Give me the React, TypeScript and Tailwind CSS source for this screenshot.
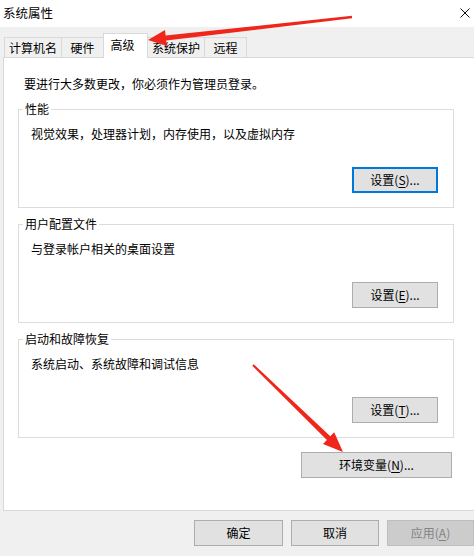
import React from "react";

const font = { fontFamily: '"Noto Sans CJK SC", "Noto Sans", sans-serif' };

function U({ c }: { c: string }) {
  return <span className="underline underline-offset-2">{c}</span>;
}

function Btn({
  children,
  w,
  focused,
  disabled,
}: {
  children: React.ReactNode;
  w: string;
  focused?: boolean;
  disabled?: boolean;
}) {
  const base = "flex items-center justify-center h-[26px] text-[12px] leading-[16px] box-border";
  let cls = "";
  if (focused) cls = "border-2 border-[#0078d7] bg-[#e1e1e1] text-black";
  else if (disabled) cls = "border border-[#bfbfbf] bg-[#cccccc] text-[#838383]";
  else cls = "border border-[#adadad] bg-[#e1e1e1] text-black";
  return <div className={`${base} ${cls} ${w}`}>{children}</div>;
}

function Group({
  title,
  text,
  button,
  first,
}: {
  title: string;
  text: string;
  button: React.ReactNode;
  first?: boolean;
}) {
  return (
    <fieldset
      className={`${first ? "mt-[9px]" : "mt-[8px]"} ml-[14px] w-[436px] border border-[#dcdcdc] rounded-none`}
    >
      <legend className="ml-[4px] px-[2px] text-[12px] leading-[16px] text-black">{title}</legend>
      <div className="pl-[12px] mt-[9px] text-[12px] leading-[16px] text-black">{text}</div>
      <div className="flex justify-end pr-[15px] mt-[25px] pb-[14px]">{button}</div>
    </fieldset>
  );
}

export default function App() {
  return (
    <div className="relative w-[474px] h-[556px] overflow-hidden bg-[#f0f0f0]" style={font}>
      {/* Title bar */}
      <div className="h-[27px] bg-white flex items-center justify-between pl-[3px] pr-[4px]">
        <span className="text-[12.5px] leading-[16px] text-black -mt-[1px]">系统属性</span>
        <svg width="10" height="10" viewBox="0 0 10 10" className="-mt-[2px]">
          <path d="M0.5 0.5 L9.5 9.5 M9.5 0.5 L0.5 9.5" stroke="#111" strokeWidth="1" fill="none" />
        </svg>
      </div>

      {/* Tabs */}
      <div className="h-[30px] flex items-end pl-[4px]">
        <div className="h-[20px] w-[57px] flex items-center justify-center border-l border-t border-[#d9d9d9] text-[12px] leading-[16px] text-black">
          计算机名
        </div>
        <div className="h-[20px] w-[42px] flex items-center justify-center border-l border-t border-[#d9d9d9] text-[12px] leading-[16px] text-black">
          硬件
        </div>
        <div className="relative z-10 h-[25px] w-[45px] -mb-px flex items-center justify-center pb-[3px] pr-[6px] bg-white border-l border-t border-r border-[#d9d9d9] text-[12px] leading-[16px] text-black">
          高级
        </div>
        <div className="h-[20px] w-[56px] flex items-center justify-center border-t border-[#d9d9d9] text-[12px] leading-[16px] text-black">
          系统保护
        </div>
        <div className="h-[20px] w-[43px] flex items-center justify-center border-l border-t border-r border-[#d9d9d9] text-[12px] leading-[16px] text-black">
          远程
        </div>
      </div>

      {/* Panel */}
      <div className="ml-[3px] h-[454px] bg-white border-l border-t border-b border-[#d9d9d9] flex flex-col pt-[18px]">
        <div className="pl-[20px] text-[12px] leading-[16px] text-black">
          要进行大多数更改，你必须作为管理员登录。
        </div>
        <Group
          first
          title="性能"
          text="视觉效果，处理器计划，内存使用，以及虚拟内存"
          button={
            <Btn w="w-[86px]" focused>
              设置(<U c="S" />)...
            </Btn>
          }
        />
        <Group
          title="用户配置文件"
          text="与登录帐户相关的桌面设置"
          button={
            <Btn w="w-[86px]">
              设置(<U c="E" />)...
            </Btn>
          }
        />
        <Group
          title="启动和故障恢复"
          text="系统启动、系统故障和调试信息"
          button={
            <Btn w="w-[86px]">
              设置(<U c="T" />)...
            </Btn>
          }
        />
        <div className="flex justify-end pr-[22px] mt-[14px]">
          <Btn w="w-[151px]">
            环境变量(<U c="N" />)...
          </Btn>
        </div>
      </div>

      {/* Bottom buttons */}
      <div className="flex justify-end gap-[8px] mt-[9px]">
        <Btn w="w-[89px]">确定</Btn>
        <Btn w="w-[88px]">取消</Btn>
        <Btn w="w-[87px]" disabled>
          应用(<U c="A" />)
        </Btn>
      </div>

      {/* Red annotation arrows */}
      <svg
        className="absolute inset-0 pointer-events-none z-20"
        width="474"
        height="556"
        viewBox="0 0 474 556"
      >
        <polygon
          points="351.9,15.8 165.6,35.5 165,30 148,40 166.8,46 166.2,40.5 352.1,18.2"
          fill="#f0261a"
        />
        <polygon
          points="253.7,364.3 330.3,436.3 334.2,432.3 343,452 323,443.9 326.9,439.9 252.3,365.7"
          fill="#f0261a"
        />
      </svg>
    </div>
  );
}
